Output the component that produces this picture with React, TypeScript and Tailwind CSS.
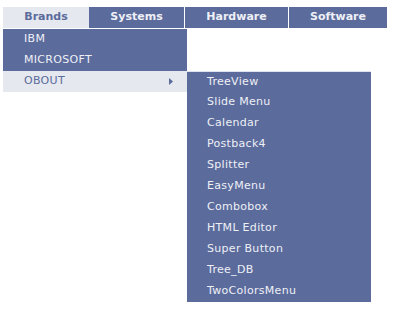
import React from 'react';

const tabs = [
  { label: 'Brands', w: 'w-[86px]', active: true },
  { label: 'Systems', w: 'w-[96px]', active: false },
  { label: 'Hardware', w: 'w-[104px]', active: false },
  { label: 'Software', w: 'w-[99px]', active: false },
];

const brands = ['IBM', 'MICROSOFT'];

const products = [
  'TreeView',
  'Slide Menu',
  'Calendar',
  'Postback4',
  'Splitter',
  'EasyMenu',
  'Combobox',
  'HTML Editor',
  'Super Button',
  'Tree_DB',
  'TwoColorsMenu',
];

const App: React.FC = () => {
  return (
    <div
      className="relative w-[398px] h-[310px] bg-white pt-[7px] pl-[3px] text-[11px]"
      style={{ fontFamily: '"DejaVu Sans", Verdana, sans-serif' }}
    >
      {/* Top bar */}
      <div className="flex h-[21px]">
        {tabs.map((tab) => (
          <div
            key={tab.label}
            className={
              tab.active
                ? `${tab.w} flex items-center justify-center font-bold bg-[#e5e8ee] text-[#5b6b9c]`
                : `${tab.w} flex items-center justify-center font-bold bg-[#5b6b9c] text-[#eef0f6] border-r border-white`
            }
          >
            {tab.label}
          </div>
        ))}
      </div>

      {/* Brands dropdown */}
      <div className="absolute top-[29px] left-[3px] w-[184px] tracking-[0.3px]">
        {brands.map((b) => (
          <div
            key={b}
            className="h-[21px] flex items-center pl-[21px] bg-[#5b6b9c] text-[#eef0f6]"
          >
            {b}
          </div>
        ))}
        <div className="relative h-[21px] flex items-center pl-[21px] bg-[#e5e8ee] text-[#5b6b9c]">
          OBOUT
          <svg
            className="absolute left-[166px] top-[7px]"
            width="4"
            height="7"
            viewBox="0 0 4 7"
          >
            <path d="M0 0 L4 3.5 L0 7 Z" fill="#5b6b9c" />
          </svg>

          {/* Sub menu */}
          <div className="absolute left-full top-0 w-[184px] bg-[#5b6b9c] border-t border-[#dfe3ee]">
            {products.map((p, i) => (
              <div
                key={p}
                className={`${i === 0 ? 'h-[20px]' : 'h-[21px]'} flex items-center pl-[20px] text-[#eef0f6]`}
              >
                {p}
              </div>
            ))}
          </div>
        </div>
      </div>
    </div>
  );
};

export default App;
